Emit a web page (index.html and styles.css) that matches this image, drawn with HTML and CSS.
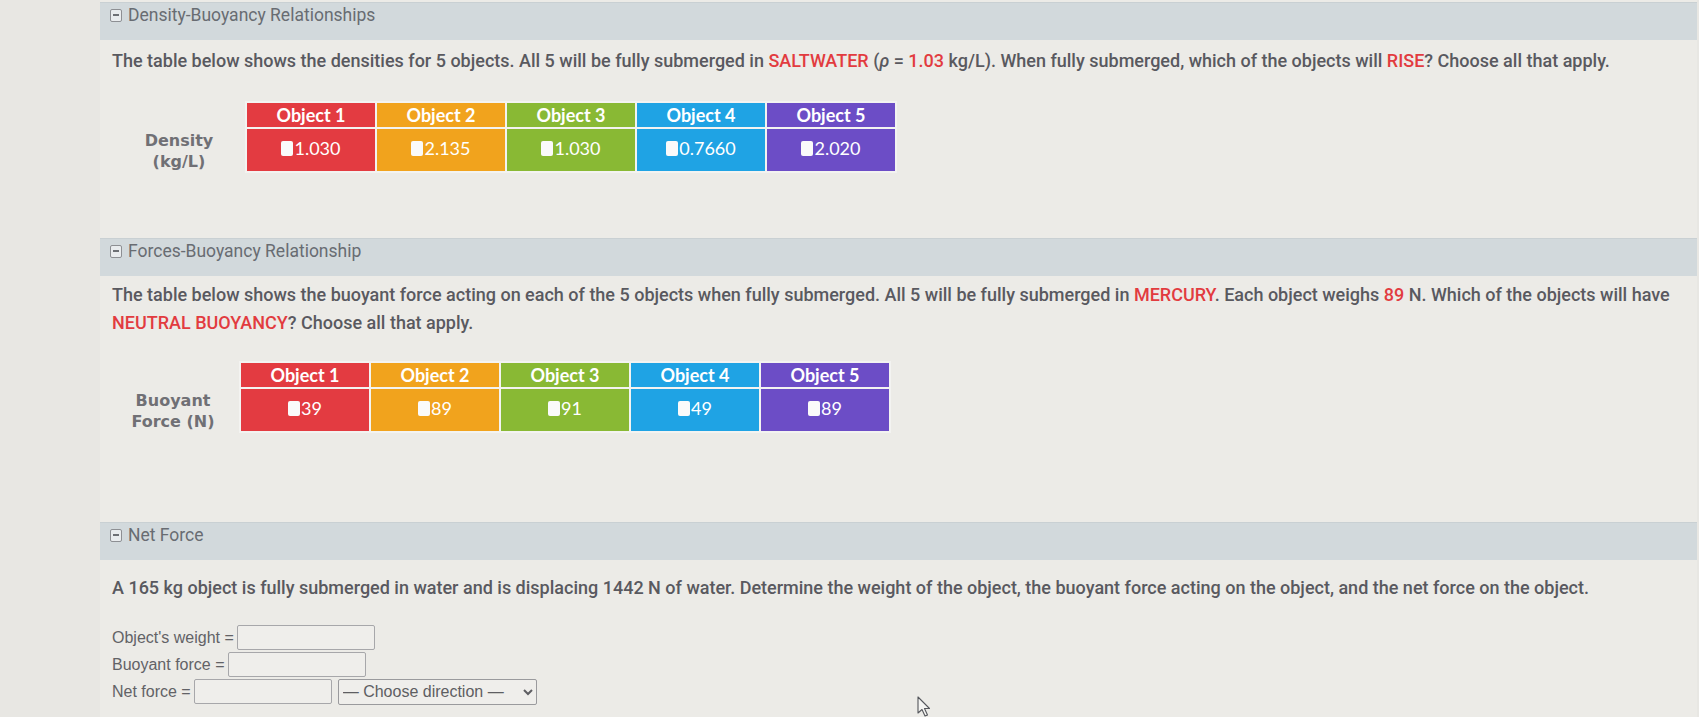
FILE: index.html
```html
<!DOCTYPE html>
<html>
<head>
<meta charset="utf-8">
<link rel="stylesheet" href="styles.css">
</head>
<body>
<div class="page">
  <section class="sec">
    <div class="sec-head"><span class="toggle"></span><span class="sec-title">Density-Buoyancy Relationships</span></div>
    <div class="sec-body b1">
      <p class="q">The table below shows the densities for 5 objects. All 5 will be fully submerged in <span class="hl">SALTWATER</span> (<i>ρ</i> = <span class="hl">1.03</span> kg/L). When fully submerged, which of the objects will <span class="hl">RISE</span>? Choose all that apply.</p>
      <div class="tbl-row t1">
        <div class="row-label">Density<br>(kg/L)</div>
        <table class="objs">
          <tr><th class="c1">Object 1</th><th class="c2">Object 2</th><th class="c3">Object 3</th><th class="c4">Object 4</th><th class="c5">Object 5</th></tr>
          <tr><td class="c1"><span class="cb"></span>1.030</td><td class="c2"><span class="cb"></span>2.135</td><td class="c3"><span class="cb"></span>1.030</td><td class="c4"><span class="cb"></span>0.7660</td><td class="c5"><span class="cb"></span>2.020</td></tr>
        </table>
      </div>
    </div>
  </section>
  <section class="sec">
    <div class="sec-head"><span class="toggle"></span><span class="sec-title">Forces-Buoyancy Relationship</span></div>
    <div class="sec-body b2">
      <p class="q">The table below shows the buoyant force acting on each of the 5 objects when fully submerged. All 5 will be fully submerged in <span class="hl">MERCURY</span>. Each object weighs <span class="hl">89</span> N. Which of the objects will have<br><span class="hl">NEUTRAL BUOYANCY</span>? Choose all that apply.</p>
      <div class="tbl-row t2">
        <div class="row-label">Buoyant<br>Force (N)</div>
        <table class="objs">
          <tr><th class="c1">Object 1</th><th class="c2">Object 2</th><th class="c3">Object 3</th><th class="c4">Object 4</th><th class="c5">Object 5</th></tr>
          <tr><td class="c1"><span class="cb"></span>39</td><td class="c2"><span class="cb"></span>89</td><td class="c3"><span class="cb"></span>91</td><td class="c4"><span class="cb"></span>49</td><td class="c5"><span class="cb"></span>89</td></tr>
        </table>
      </div>
    </div>
  </section>
  <section class="sec">
    <div class="sec-head"><span class="toggle"></span><span class="sec-title">Net Force</span></div>
    <div class="sec-body b3">
      <p class="q">A 165 kg object is fully submerged in water and is displacing 1442 N of water. Determine the weight of the object, the buoyant force acting on the object, and the net force on the object.</p>
      <div class="form">
        <div class="frow"><label>Object's weight =</label><input type="text" class="box"></div>
        <div class="frow"><label>Buoyant force =</label><input type="text" class="box"></div>
        <div class="frow"><label>Net force =</label><input type="text" class="box"><select class="dir"><option>— Choose direction —</option></select></div>
      </div>
    </div>
  </section>
  <svg class="cursor" width="14" height="22" viewBox="0 0 14 22"><path d="M1 1 L1 17 L5 13.5 L8 20 L10.5 19 L7.5 12.5 L12.5 12.5 Z" fill="#f4f4f2" stroke="#55575c" stroke-width="1.1" stroke-linejoin="round"/></svg>
</div>
</body>
</html>
```
FILE: styles.css
```css
html, body {
  margin: 0;
  padding: 0;
}
body {
  background: #e8e7e3;
  font-family: Roboto, "Liberation Sans", sans-serif;
  color: #58585e;
  width: 1699px;
  height: 717px;
  overflow: hidden;
}
.page {
  position: relative;
  margin-left: 100px;
  margin-right: 2px;
  padding-top: 2px;
  background: #ecebe7;
  height: 715px;
}
.sec-head {
  height: 38px;
  box-sizing: border-box;
  padding: 2px 0 0 10px;
  background: #d2d9dc;
  border-top: 1px solid #c9d0d3;
  display: flex;
  align-items: flex-start;
  gap: 6px;
}
.toggle {
  width: 10px;
  height: 11px;
  margin-top: 4px;
  border: 1px solid #8d8f93;
  border-radius: 2px;
  background: #e9ecee;
  position: relative;
  flex: none;
}
.toggle::after {
  content: "";
  position: absolute;
  left: 2px;
  right: 2px;
  top: 4px;
  height: 2px;
  background: #6d7075;
}
.sec-title {
  font-size: 17.5px;
  line-height: 20px;
  color: #686c72;
}
.sec-body {
  padding-left: 12px;
  padding-right: 8px;
}
.b1 { padding-top: 7px; padding-bottom: 65px; }
.b2 { padding-top: 5px; padding-bottom: 89px; }
.b3 { padding-top: 14px; }
.q {
  margin: 0;
  font-size: 18px;
  line-height: 28px;
  font-weight: 500;
  color: #59595f;
  white-space: nowrap;
}
.hl { color: #e23b3f; }
.tbl-row {
  display: flex;
  align-items: flex-end;
}
.t1 { margin-top: 26px; margin-left: 16px; }
.t2 { margin-top: 24px; margin-left: 10px; }
.row-label {
  width: 102px;
  margin-right: 15px;
  height: 44px;
  display: flex;
  align-items: center;
  justify-content: center;
  text-align: center;
  font-family: "DejaVu Sans", Verdana, sans-serif;
  font-weight: bold;
  font-size: 16px;
  line-height: 21px;
  color: #707075;
}
.objs {
  border-collapse: collapse;
  font-family: Lato, "Open Sans", sans-serif;
  color: #fff;
}
.objs th, .objs td {
  width: 130px;
  padding: 0;
  border: 2px solid #f3f3f1;
  text-align: center;
  box-sizing: border-box;
}
.objs th {
  height: 26px;
  font-size: 18px;
  font-weight: bold;
  line-height: 22px;
}
.objs td {
  height: 44px;
  font-size: 18px;
  line-height: 20px;
  padding-bottom: 4px;
}
.cb {
  display: inline-block;
  width: 12px;
  height: 15px;
  background: #fafafa;
  border-radius: 2px;
  margin-right: 1px;
  vertical-align: -1px;
}
.c1 { background: #e33b41; }
.c2 { background: #f1a31d; }
.c3 { background: #89b934; }
.c4 { background: #1fa3e4; }
.c5 { background: #6c4dc6; }
.form {
  margin-top: 22px;
  font-family: "Liberation Sans", Arial, sans-serif;
  font-size: 16px;
  color: #626266;
}
.frow {
  height: 27px;
  display: flex;
  align-items: center;
}
.frow label {
  margin-right: 3px;
}
.box {
  width: 138px;
  height: 25px;
  box-sizing: border-box;
  border: 1px solid #a7a7aa;
  border-radius: 2px;
  background: #efeeeb;
  margin: 0;
}
.dir {
  margin-left: 6px;
  width: 199px;
  height: 26px;
  box-sizing: border-box;
  border: 1px solid #9a9a9d;
  border-radius: 2px;
  background: #efeeeb;
  font-family: "Liberation Sans", Arial, sans-serif;
  font-size: 16px;
  color: #5e5e62;
}
.cursor {
  position: absolute;
  left: 817px;
  top: 696px;
}
```
